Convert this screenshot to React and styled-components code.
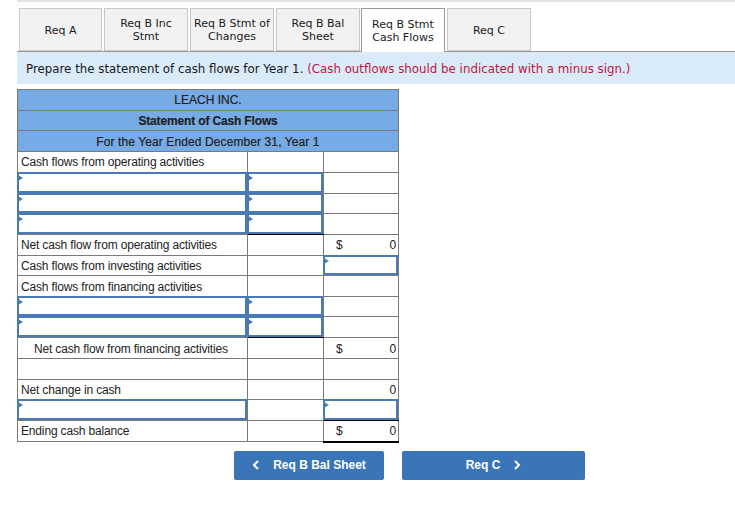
import React from "react";
import styled, { createGlobalStyle } from "styled-components";

const Global = createGlobalStyle`
  html, body { margin: 0; padding: 0; background: #fff; }
  body { width: 735px; height: 523px; overflow: hidden; font-family: "Liberation Sans", Arial, sans-serif; }
`;
const Page = styled.div`
  padding: 0 0 0 17px;
  display: flex;
  flex-direction: column;
`;
const TopRule = styled.div`height: 2px; background: #e2e2e2;`;
const Tabs = styled.div`
  display: flex;
  margin-top: 6px;
  padding-left: 2px;
  gap: 2px;
  border-bottom: 1px solid #999;
  height: 43px;
`;
const Tab = styled.div`
  width: ${p => p.$w}px;
  height: ${p => (p.$active ? 44 : 43)}px;
  margin-left: ${p => (p.$active ? -1 : 0)}px;
  box-sizing: border-box;
  padding-top: ${p => (p.$active ? 0 : 1)}px;
  display: flex;
  align-items: center;
  justify-content: center;
  text-align: center;
  font-family: "DejaVu Sans", Verdana, sans-serif;
  font-size: 11px;
  line-height: 13px;
  color: #1a1a1a;
  background: ${p => (p.$active ? "#fff" : "#f2f2f2")};
  border: 1px solid ${p => (p.$active ? "#999" : "#c8c8c8")};
  border-bottom: ${p => (p.$active ? "none" : "1px solid #c8c8c8")};
  position: relative;
  z-index: 1;
`;
const Info = styled.div`
  height: 32px;
  background: #d9eaf9;
  display: flex;
  align-items: center;
  padding: 1px 0 0 9px;
  box-sizing: border-box;
  font-family: "DejaVu Sans", Verdana, sans-serif;
  font-size: 11.82px;
  color: #1a1a1a;
  white-space: pre;
`;
const Red = styled.span`color: #c1163a;`;
const Table = styled.table`
  margin-top: 5px;
  width: 382px;
  table-layout: fixed;
  border-collapse: collapse;
  font-family: "Liberation Sans", Arial, sans-serif;
  font-size: 12px;
  color: #222;
`;
const Tr = styled.tr`height: ${p => p.$h}px;`;
const Head = styled.td`
  background: #77abe6;
  border: 1px solid #7a7a7a;
  text-align: center;
  font-weight: ${p => (p.$bold ? 700 : 400)};
  letter-spacing: ${p => p.$spread || 0}px;
  padding: ${p => (p.$low ? 1 : 0)}px 0 0;
  -webkit-text-stroke: 0.2px #222;
`;
const Cell = styled.td`
  border: 1px solid #7a7a7a;
  ${p => p.$bottomBlack && "border-bottom: 2px solid #000;"}
  padding: ${p => (p.$low ? 2 : 0)}px ${p => (p.$num ? 2 : 0)}px 0 ${p => (p.$indent ? 16 : 3)}px;
  letter-spacing: -0.16px;
  white-space: nowrap;
  position: relative;
`;
const InputCell = styled.td`
  border: 1px solid #7a7a7a;
  ${p => p.$bottomBlack && "border-bottom: 1px solid #000;"}
  padding: 0;
  position: relative;
`;
const InputBox = styled.div`
  position: absolute;
  inset: -1px 0 0 -1px;
  box-sizing: border-box;
  border: 2px solid #4a7ab5;
  background: #fff;
  &::before {
    content: "";
    position: absolute;
    left: -1px;
    top: 1px;
    border-left: 5px solid #4a7ab5;
    border-top: 3px solid transparent;
    border-bottom: 3px solid transparent;
  }
`;
const Money = styled.div`
  display: flex;
  justify-content: space-between;
  padding-left: 9px;
`;
const Num = styled.div`text-align: right;`;
const Nav = styled.div`
  display: flex;
  margin: 8px 0 0 217px;
  gap: 18px;
`;
const NavButton = styled.div`
  width: ${p => p.$w}px;
  height: 29px;
  box-sizing: border-box;
  border-radius: 2px;
  background: #3a75b8;
  color: #fff;
  display: flex;
  align-items: center;
  justify-content: center;
  gap: 13px;
  font-size: 12px;
  font-weight: 700;
`;
const Chevron = ({ dir }) => (
  <svg width="8" height="10" viewBox="0 0 8 10" fill="none" stroke="#fff" strokeWidth="2">
    <path d={dir === "left" ? "M6 1 L2 5 L6 9" : "M2 1 L6 5 L2 9"} />
  </svg>
);
const Input = ({ black }) => (
  <InputCell $bottomBlack={black}><InputBox /></InputCell>
);
const Label = ({ children, indent, low }) => <Cell $indent={indent} $low={low}>{children}</Cell>;
const Dollar = ({ low }) => <Cell $num $low={low}><Money><span>$</span><span>0</span></Money></Cell>;

export default function App() {
  return (
    <Page>
      <Global />
      <TopRule />
      <Tabs>
        <Tab $w={83}>Req A</Tab>
        <Tab $w={84}>Req B Inc<br />Stmt</Tab>
        <Tab $w={84}>Req B Stmt of<br />Changes</Tab>
        <Tab $w={84}>Req B Bal<br />Sheet</Tab>
        <Tab $w={84} $active>Req B Stmt<br />Cash Flows</Tab>
        <Tab $w={84}>Req C</Tab>
      </Tabs>
      <Info>Prepare the statement of cash flows for Year 1. <Red>(Cash outflows should be indicated with a minus sign.)</Red></Info>
      <Table>
        <colgroup><col style={{ width: 230 }} /><col style={{ width: 76 }} /><col style={{ width: 75 }} /></colgroup>
        <tbody>
          <Tr $h={21}><Head colSpan={3}>LEACH INC.</Head></Tr>
          <Tr $h={20}><Head colSpan={3} $bold $spread={-0.15}>Statement of Cash Flows</Head></Tr>
          <Tr $h={21}><Head colSpan={3} $spread={0.1} $low>For the Year Ended December 31, Year 1</Head></Tr>
          <Tr $h={21}><Label>Cash flows from operating activities</Label><Cell /><Cell /></Tr>
          <Tr $h={21}><Input /><Input /><Cell /></Tr>
          <Tr $h={20}><Input /><Input /><Cell /></Tr>
          <Tr $h={21}><Input /><Input black /><Cell /></Tr>
          <Tr $h={21}><Label>Net cash flow from operating activities</Label><Cell /><Dollar /></Tr>
          <Tr $h={20}><Label>Cash flows from investing activities</Label><Cell /><Input /></Tr>
          <Tr $h={21}><Label low>Cash flows from financing activities</Label><Cell /><Cell /></Tr>
          <Tr $h={20}><Input /><Input /><Cell /></Tr>
          <Tr $h={21}><Input /><Input black /><Cell /></Tr>
          <Tr $h={21}><Label indent low>Net cash flow from financing activities</Label><Cell /><Dollar low /></Tr>
          <Tr $h={21}><Cell /><Cell /><Cell /></Tr>
          <Tr $h={20}><Label>Net change in cash</Label><Cell /><Cell $num><Num>0</Num></Cell></Tr>
          <Tr $h={21}><Input /><Cell /><Input black /></Tr>
          <Tr $h={21}><Label>Ending cash balance</Label><Cell /><Cell $num $bottomBlack><Money><span>$</span><span>0</span></Money></Cell></Tr>
        </tbody>
      </Table>
      <Nav>
        <NavButton $w={150}><Chevron dir="left" />Req B Bal Sheet</NavButton>
        <NavButton $w={183}>Req C<Chevron dir="right" /></NavButton>
      </Nav>
    </Page>
  );
}
